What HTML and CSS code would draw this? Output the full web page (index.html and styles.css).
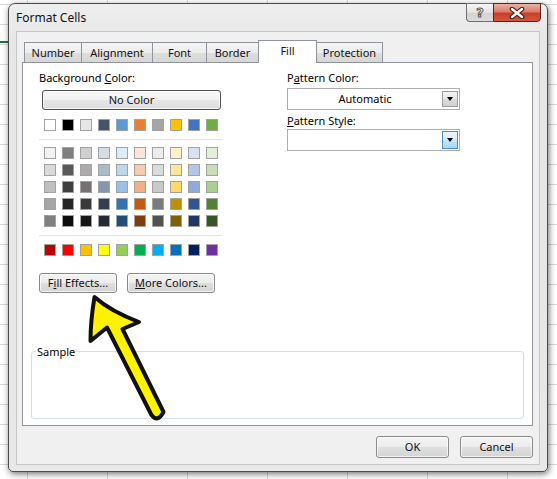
FILE: index.html
```html
<!DOCTYPE html>
<html>
<head>
<meta charset="utf-8">
<title>Format Cells</title>
<link rel="stylesheet" href="styles.css">
</head>
<body>
<div class="sheet-mark"></div>
<div class="dialog">
  <div class="titlebar">
    <span class="title">Format Cells</span>
    <div class="caption">
      <span class="cap-help">?</span>
      <span class="cap-close"><svg width="16" height="12" viewBox="0 0 16 12"><path d="M3 2 L13 10 M13 2 L3 10" stroke="#4a1a10" stroke-width="4.6" stroke-linecap="round"/><path d="M3 2 L13 10 M13 2 L3 10" stroke="#ffffff" stroke-width="2.4" stroke-linecap="round"/></svg></span>
    </div>
  </div>
  <div class="client">
    <div class="tabs">
      <div class="tab w-number">Number</div>
      <div class="tab w-align">Alignment</div>
      <div class="tab w-font">Font</div>
      <div class="tab w-border">Border</div>
      <div class="tab sel w-fill">Fill</div>
      <div class="tab w-prot">Protection</div>
    </div>
    <div class="panel">
      <div class="cols">
        <div class="left">
          <div class="label">Background <u>C</u>olor:</div>
          <div class="btn btn-default nocolor">No Color</div>
          <div class="swatches row1">
            <span class="sw" style="background:#ffffff"></span><span class="sw" style="background:#000000"></span><span class="sw" style="background:#e7e6e6"></span><span class="sw" style="background:#44546a"></span><span class="sw" style="background:#5b9bd5"></span><span class="sw" style="background:#ed7d31"></span><span class="sw" style="background:#a5a5a5"></span><span class="sw" style="background:#ffc000"></span><span class="sw" style="background:#4472c4"></span><span class="sw" style="background:#70ad47"></span>
          </div>
          <div class="sep"></div>
          <div class="swatches theme">
            <span class="sw" style="background:#f2f2f2"></span><span class="sw" style="background:#7f7f7f"></span><span class="sw" style="background:#d0cece"></span><span class="sw" style="background:#d6dce4"></span><span class="sw" style="background:#ddebf7"></span><span class="sw" style="background:#fce4d6"></span><span class="sw" style="background:#ededed"></span><span class="sw" style="background:#fff2cc"></span><span class="sw" style="background:#d9e1f2"></span><span class="sw" style="background:#e2efda"></span>
            <span class="sw" style="background:#d9d9d9"></span><span class="sw" style="background:#595959"></span><span class="sw" style="background:#aeaaaa"></span><span class="sw" style="background:#acb9ca"></span><span class="sw" style="background:#bdd7ee"></span><span class="sw" style="background:#f8cbad"></span><span class="sw" style="background:#dbdbdb"></span><span class="sw" style="background:#ffe699"></span><span class="sw" style="background:#b4c6e7"></span><span class="sw" style="background:#c6e0b4"></span>
            <span class="sw" style="background:#bfbfbf"></span><span class="sw" style="background:#404040"></span><span class="sw" style="background:#757171"></span><span class="sw" style="background:#8497b0"></span><span class="sw" style="background:#9bc2e6"></span><span class="sw" style="background:#f4b084"></span><span class="sw" style="background:#c9c9c9"></span><span class="sw" style="background:#ffd966"></span><span class="sw" style="background:#8ea9db"></span><span class="sw" style="background:#a9d08e"></span>
            <span class="sw" style="background:#a6a6a6"></span><span class="sw" style="background:#262626"></span><span class="sw" style="background:#3a3838"></span><span class="sw" style="background:#333f4f"></span><span class="sw" style="background:#2f75b5"></span><span class="sw" style="background:#c65911"></span><span class="sw" style="background:#7b7b7b"></span><span class="sw" style="background:#bf8f00"></span><span class="sw" style="background:#305496"></span><span class="sw" style="background:#548235"></span>
            <span class="sw" style="background:#808080"></span><span class="sw" style="background:#0d0d0d"></span><span class="sw" style="background:#161616"></span><span class="sw" style="background:#222b35"></span><span class="sw" style="background:#1f4e78"></span><span class="sw" style="background:#833c0c"></span><span class="sw" style="background:#525252"></span><span class="sw" style="background:#806000"></span><span class="sw" style="background:#203764"></span><span class="sw" style="background:#375623"></span>
          </div>
          <div class="sep"></div>
          <div class="swatches std">
            <span class="sw" style="background:#c00000"></span><span class="sw" style="background:#ff0000"></span><span class="sw" style="background:#ffc000"></span><span class="sw" style="background:#ffff00"></span><span class="sw" style="background:#92d050"></span><span class="sw" style="background:#00b050"></span><span class="sw" style="background:#00b0f0"></span><span class="sw" style="background:#0070c0"></span><span class="sw" style="background:#002060"></span><span class="sw" style="background:#7030a0"></span>
          </div>
          <div class="btnrow">
            <div class="btn fill-btn">F<u>i</u>ll Effects...</div>
            <div class="btn more-btn"><u>M</u>ore Colors...</div>
          </div>
        </div>
        <div class="right">
          <div class="label">P<u>a</u>ttern Color:</div>
          <div class="combo">
            <span class="combo-text">Automatic</span>
            <span class="dd"><span class="tri"></span></span>
          </div>
          <div class="label label2"><u>P</u>attern Style:</div>
          <div class="combo combo2">
            <span class="combo-text"></span>
            <span class="dd dd-hot"><span class="tri"></span></span>
          </div>
        </div>
      </div>
      <fieldset class="sample">
        <legend>Sample</legend>
      </fieldset>
    </div>
    <div class="footer">
      <div class="btn foot-btn">OK</div>
      <div class="btn foot-btn">Cancel</div>
    </div>
  </div>
</div>
<svg class="arrow" width="557" height="479" viewBox="0 0 557 479">
  <path d="M94.5 297 C92 312 90.5 327 90.5 341 L107 327.5 L151.5 415 Q157.5 423 163.5 412 L122.5 329 L139 322 C123 316 107 308 94.5 297 Z" fill="#fff200" stroke="#111111" stroke-width="4" stroke-linejoin="round"/>
</svg>
</body>
</html>
```
FILE: styles.css
```css
* { box-sizing: border-box; }
html, body { margin: 0; padding: 0; }
body {
  width: 557px;
  height: 479px;
  overflow: hidden;
  position: relative;
  padding: 3px 0 0 8px;
  font-family: "Noto Sans", "Open Sans", sans-serif;
  font-size: 11px;
  line-height: 15px;
  color: #000;
  background-color: #ffffff;
  background-image:
    linear-gradient(#d8d8d8 1px, transparent 1px),
    linear-gradient(90deg, #d8d8d8 1px, transparent 1px);
  background-size: 80px 20px;
  background-position: 27px 4px;
}
.sheet-mark {
  position: absolute;
  left: 0;
  top: 41px;
  width: 10px;
  height: 2px;
  background: #217346;
}
.dialog {
  position: relative;
  width: 540px;
  height: 469px;
  border: 1px solid #4b4b4b;
  border-radius: 7px 7px 5px 5px;
  background: linear-gradient(#eeeeee, #e6e6e6 40px, #e8e8e8);
  box-shadow: 1px 2px 6px rgba(0,0,0,0.55);
  display: flex;
  flex-direction: column;
  padding: 0 7px 6px 7px;
}
.titlebar {
  height: 27px;
  display: flex;
  justify-content: space-between;
  align-items: flex-start;
}
.title {
  font-size: 12px;
  line-height: 27px;
  color: #111;
}
.caption {
  display: flex;
  margin-top: -1px;
  margin-right: -1px;
}
.cap-help {
  width: 27px;
  height: 19px;
  border: 1px solid #6f6f6f;
  border-right: none;
  border-radius: 0 0 0 4px;
  background: linear-gradient(#f6f6f6, #e3e3e3 50%, #d2d2d2 51%, #dcdcdc);
  text-align: center;
  font-family: "DejaVu Sans", sans-serif;
  font-weight: bold;
  font-size: 13px;
  line-height: 17px;
  color: #f2f2f2;
  -webkit-text-stroke: 1px #5c5c5c;
}
.cap-close {
  width: 48px;
  height: 19px;
  border: 1px solid #5b2318;
  border-radius: 0 0 4px 0;
  background: linear-gradient(#eab2a5, #dc7c69 45%, #c8402a 55%, #d2573f);
  display: flex;
  align-items: center;
  justify-content: center;
}
.client {
  flex: 1;
  background: #f0f0f0;
  border: 1px solid #c6c6c6;
  padding: 8px 6px 0 5px;
  display: flex;
  flex-direction: column;
}
.tabs {
  display: flex;
  align-items: flex-end;
  height: 22px;
  margin-left: 2px;
  position: relative;
  z-index: 1;
}
.tab {
  height: 20px;
  border: 1px solid #8f939b;
  border-bottom: none;
  background: linear-gradient(#f4f4f4, #ececec 50%, #dedede 51%, #d6d6d6);
  text-align: center;
  line-height: 19px;
  color: #111;
}
.tab + .tab { margin-left: -1px; }
.tab.sel {
  height: 23px;
  margin-bottom: -1px;
  background: #ffffff;
  position: relative;
  z-index: 2;
  line-height: 20px;
}
.w-number { width: 58px; }
.w-align { width: 72px; }
.w-font { width: 55px; }
.w-border { width: 53px; }
.w-fill { width: 59px; }
.w-prot { width: 67px; }
.panel {
  height: 364px;
  border: 1px solid #8f939b;
  background: #ffffff;
  padding: 7px 8px 0 8px;
}
.cols {
  display: grid;
  grid-template-columns: 248px 173px;
  padding-left: 8px;
}
.left, .right {
  display: flex;
  flex-direction: column;
  align-items: flex-start;
}
.label { height: 15px; }
.btn {
  border: 1px solid #8a8a8a;
  border-radius: 3px;
  background: linear-gradient(#f4f4f4, #ececec 50%, #dfdfdf 51%, #d4d4d4);
  box-shadow: inset 0 0 0 1px rgba(255,255,255,0.7);
  text-align: center;
  color: #111;
}
.btn-default {
  border-color: #4f4f4f;
  background: linear-gradient(#f8f8f8, #f0f0f0 50%, #e6e6e6 51%, #dddddd);
}
.nocolor {
  margin: 5px 0 0 3px;
  width: 179px;
  height: 20px;
  line-height: 18px;
}
.swatches {
  display: grid;
  grid-template-columns: repeat(10, 12px);
  column-gap: 6px;
  row-gap: 5px;
  margin-left: 5px;
}
.row1 { margin-top: 9px; }
.theme { margin-top: 7px; }
.std { margin-top: 8px; }
.sw {
  width: 12px;
  height: 12px;
  border: 1px solid #a2a2a2;
}
.sep {
  width: 183px;
  height: 1px;
  background: #e2e2e2;
  margin-top: 8px;
}
.btnrow {
  display: flex;
  gap: 10px;
  margin-top: 17px;
}
.fill-btn, .more-btn {
  height: 20px;
  line-height: 18px;
}
.fill-btn { width: 78px; }
.more-btn { width: 88px; }
.combo {
  width: 173px;
  height: 22px;
  margin-top: 3px;
  border: 1px solid #abadb3;
  background: #fff;
  display: flex;
  align-items: center;
}
.combo2 { margin-top: 1px; }
.label2 { margin-top: 3px; }
.combo-text {
  flex: 1;
  text-align: center;
  line-height: 20px;
}
.dd {
  width: 16px;
  height: 16px;
  margin-right: 1px;
  border: 1px solid #9c9c9c;
  background: linear-gradient(#f3f3f3, #e6e6e6 50%, #dadada 51%, #d2d2d2);
  display: flex;
  align-items: center;
  justify-content: center;
}
.dd-hot {
  height: 18px;
  border-color: #4d8fc4;
  background: linear-gradient(#e9f5fd, #d8eefb 50%, #bee6fd 51%, #a7d9f5);
}
.tri {
  width: 0;
  height: 0;
  border-left: 3.5px solid transparent;
  border-right: 3.5px solid transparent;
  border-top: 4px solid #000;
}
.sample {
  margin: 51px 0 0 0;
  height: 75px;
  border: 1px solid #d5dfe5;
  border-radius: 3px;
  padding: 0 0 0 4px;
}
.sample legend {
  padding: 0 1px;
  line-height: 15px;
  font-size: 11px;
}
.footer {
  display: flex;
  justify-content: flex-end;
  gap: 11px;
  margin-top: 10px;
}
.foot-btn {
  width: 73px;
  height: 22px;
  line-height: 20px;
}
.arrow {
  position: absolute;
  left: 0;
  top: 0;
  pointer-events: none;
}
```
